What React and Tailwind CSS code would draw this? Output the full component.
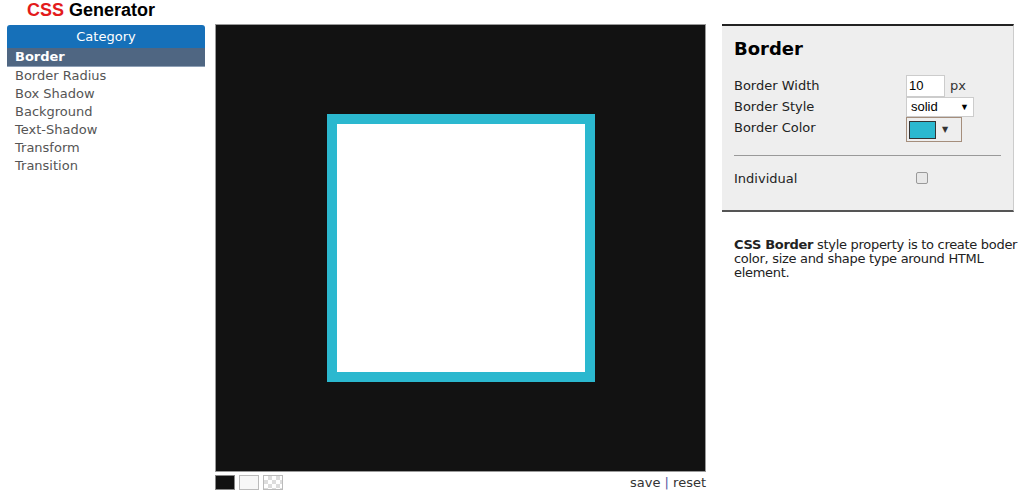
import React from 'react'

const categories = ['Border', 'Border Radius', 'Box Shadow', 'Background', 'Text-Shadow', 'Transform', 'Transition']

const verdana = { fontFamily: '"DejaVu Sans", Verdana, sans-serif' }

const Sidebar = () => (
  <div className="w-[198px] ml-[7px] mt-px">
    <div className="h-[23px] bg-[#1670b9] rounded-t-[3px] text-white text-[13px] leading-[23px] text-center">Category</div>
    <ul>
      {categories.map((c, i) => (
        <li
          key={c}
          className={
            i === 0
              ? 'h-[19px] bg-[#4f6682] text-white font-bold text-[13px] leading-[18px] pl-[8px] border-b border-[#8ea0b6]'
              : 'h-[18px] text-[#555] text-[13px] leading-[18px] pl-[8px]'
          }
        >
          {c}
        </li>
      ))}
    </ul>
  </div>
)

const Canvas = () => (
  <div className="ml-[10px] w-[491px]">
    <div className="h-[448px] bg-[#121212] border border-[#9a9a9a] flex items-center justify-center">
      <div className="w-[268px] h-[268px] bg-white border-[10px] border-[#2bb8cf]" />
    </div>
    <div className="flex items-center mt-[3px]">
      <div className="w-[20px] h-[15px] bg-[#121212] border border-[#888]" />
      <div className="w-[20px] h-[15px] bg-[#f7f7f7] border border-[#bbb] ml-[4px]" />
      <div
        className="w-[20px] h-[15px] border border-[#bbb] ml-[4px]"
        style={{
          backgroundColor: '#fff',
          backgroundImage:
            'linear-gradient(45deg,#ddd 25%,transparent 25%,transparent 75%,#ddd 75%),linear-gradient(45deg,#ddd 25%,transparent 25%,transparent 75%,#ddd 75%)',
          backgroundSize: '8px 8px',
          backgroundPosition: '0 0,4px 4px',
        }}
      />
      <div className="ml-auto text-[13px] text-[#333] leading-[15px]">
        save <span className="text-[#5a5aa0]">|</span> reset
      </div>
    </div>
  </div>
)

const Row = ({ label, children }) => (
  <div className="flex items-center h-[21px]">
    <div className="w-[172px] text-[13px] text-[#222]">{label}</div>
    {children}
  </div>
)

const Panel = () => (
  <div className="ml-[16px] w-[302px]">
    <div className="w-[292px] h-[188px] bg-[#eeeeee] border-t-2 border-t-[#222] border-b-2 border-b-[#555] border-r border-r-[#ccc] px-[12px] pt-[11px]">
      <h2 className="text-[18px] font-bold text-black leading-[24px]">Border</h2>
      <div className="mt-[14px]">
        <Row label="Border Width">
          <div className="w-[39px] h-[22px] bg-white border border-[#ccc] text-[13px] leading-[20px] pl-[2px] text-black" style={{ fontFamily: '"Liberation Sans", Arial, sans-serif' }}>10</div>
          <span className="ml-[5px] text-[13px] text-[#333]">px</span>
        </Row>
        <Row label="Border Style">
          <div className="w-[68px] h-[20px] bg-white border border-[#ccc] text-[13px] leading-[18px] pl-[4px] text-black flex items-center" style={{ fontFamily: '"Liberation Sans", Arial, sans-serif' }}>
            solid
            <span className="ml-auto mr-[4px] text-[9px]">▼</span>
          </div>
        </Row>
        <Row label="Border Color">
          <div className="w-[56px] h-[25px] border border-[#a58e7c] flex items-center pl-[2px] mt-[4px]">
            <div className="w-[27px] h-[18px] bg-[#2bb8cf] border border-[#333]" />
            <span className="ml-[6px] text-[8px] text-[#333]">▼</span>
          </div>
        </Row>
      </div>
      <div className="border-t border-[#999] mt-[17px]" />
      <div className="flex items-center h-[20px] mt-[13px]">
        <div className="w-[182px] text-[13px] text-[#222]">Individual</div>
        <div className="w-[12px] h-[12px] rounded-[2px] border border-[#999] bg-[#e8e8e8] -mt-[2px]" />
      </div>
    </div>
    <p className="mt-[26px] pl-[12px] text-[13px] leading-[14px] text-[#222] tracking-[-0.3px]">
      <b>CSS Border</b> style property is to create boder color, size and shape type around HTML element.
    </p>
  </div>
)

export default function App() {
  return (
    <div className="w-[1024px] h-[492px] bg-white overflow-hidden" style={verdana}>
      <div className="h-[24px] pl-[27px] text-[18px] font-bold leading-[20px]" style={{ fontFamily: '"Liberation Sans", Arial, sans-serif' }}>
        <span className="text-[#e31b1b]">CSS</span> <span className="text-black">Generator</span>
      </div>
      <div className="flex items-start">
        <Sidebar />
        <Canvas />
        <Panel />
      </div>
    </div>
  )
}
